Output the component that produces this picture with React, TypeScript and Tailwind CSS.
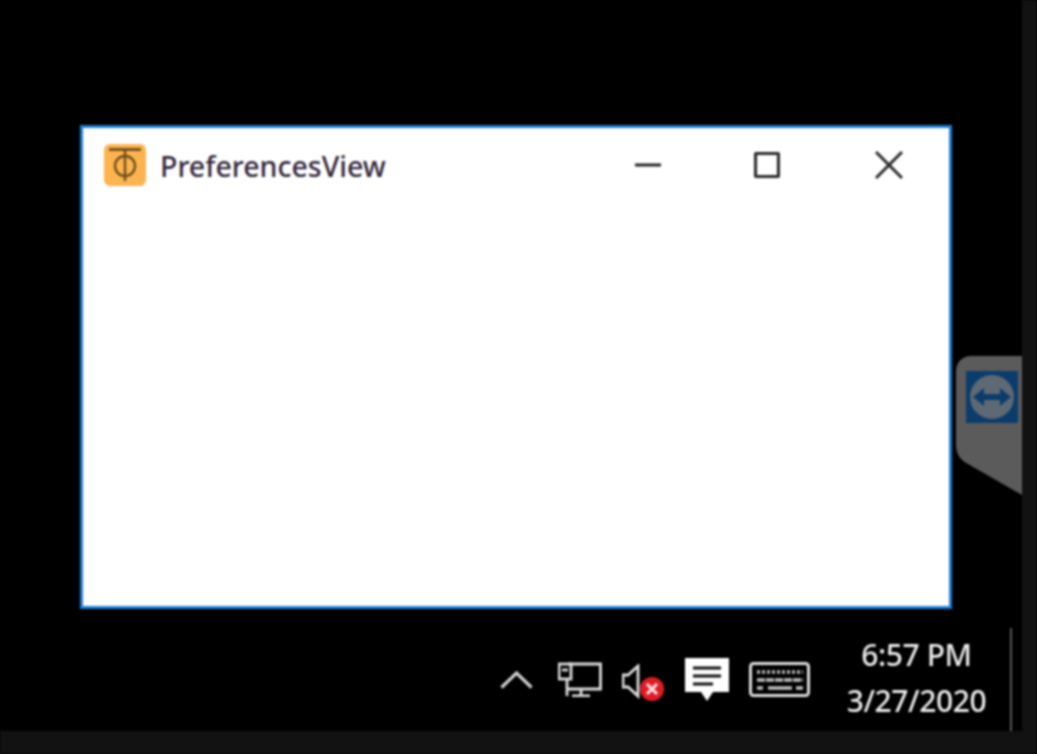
const FONT = "font-['Noto_Sans','Open_Sans',sans-serif]";

function AppGlyph() {
  return (
    <svg width="42" height="42" viewBox="0 0 42 42" className="shrink-0">
      <rect width="42" height="42" rx="6" fill="#fdb44f" />
      <g fill="none" stroke="#6f4f1c" strokeWidth="2.400">
        <path d="M5 5.500h32" strokeWidth="2.800" />
        <path d="M21 5.500V37" />
        <circle cx="21" cy="22" r="10" />
      </g>
    </svg>
  );
}

function WindowControls() {
  return (
    <div className="flex items-center gap-[93px] pr-[46px]">
      <svg width="26" height="28" viewBox="0 0 26 28">
        <path d="M0 14h26" stroke="#222" strokeWidth="3" />
      </svg>
      <svg width="26" height="26" viewBox="0 0 26 26" className="mr-[2px]">
        <rect x="1.500" y="1.500" width="23" height="23" rx="1" fill="none" stroke="#2c2c2c" strokeWidth="3.200" />
      </svg>
      <svg width="28" height="28" viewBox="0 0 28 28">
        <path d="M1 1l26 26M27 1L1 27" stroke="#2c2c2c" strokeWidth="3" />
      </svg>
    </div>
  );
}

function RemoteTab() {
  return (
    <svg width="66" height="139" viewBox="0 0 66 139" className="mt-[231px] shrink-0">
      <path d="M66 0H16C6 0 0 6 0 16V88C0 98 4 104 12 108L66 139Z" fill="#5b5b5b" />
      <rect x="10" y="15" width="52" height="52" fill="#0b3c6c" />
      <circle cx="36" cy="41" r="22" fill="#5f6973" />
      <path d="M17 41l11-9v6h16v-6l11 9-11 9v-6H28v6z" fill="#0b3c6c" />
    </svg>
  );
}

function TrayIcons() {
  return (
    <>
      <svg width="33" height="18" viewBox="0 0 33 18">
        <path d="M1.500 16.500L16.500 2l15 14.500" fill="none" stroke="#d0d0d0" strokeWidth="3.200" />
      </svg>
      <svg width="44" height="35" viewBox="0 0 44 35" className="ml-[25px]" fill="none" stroke="#dcdcdc" strokeWidth="2.800">
        <path d="M10 2h32.500v25H10" />
        <rect x="1" y="2" width="12" height="15" />
        <path d="M9 17v17M14 34h18M23 27v7" />
        <path d="M4 8h6" />
      </svg>
      <svg width="42" height="37" viewBox="0 0 42 37" className="ml-[20px] mt-[6px]">
        <path d="M1 11h5L16 2v30L6 23H1z" fill="none" stroke="#dcdcdc" strokeWidth="2.800" />
        <circle cx="30" cy="25" r="12" fill="#e01c26" />
        <path d="M25 20l10 10M35 20L25 30" stroke="#fbe4e4" strokeWidth="3" />
      </svg>
      <svg width="44" height="44" viewBox="0 0 44 44" className="ml-[21px]">
        <path d="M0 0h44v34H28l-6 9-6-9H0z" fill="#fff" />
        <path d="M8 10h28M8 18h28M8 26h20" stroke="#111" strokeWidth="3" />
      </svg>
      <svg width="61" height="35" viewBox="0 0 61 35" className="ml-[20px]">
        <rect x="1.500" y="1.500" width="58" height="32" rx="3" fill="none" stroke="#dcdcdc" strokeWidth="3" />
        <g stroke="#bcbcbc" strokeWidth="3.600">
          <path d="M8 10h46" strokeDasharray="3 2" />
          <path d="M8 18h46" strokeDasharray="8 1" />
          <path d="M8 26h6M19 26h24M47 26h7" />
        </g>
      </svg>
    </>
  );
}

export default function App() {
  return (
    <div className="w-[1037px] h-[754px] bg-black overflow-hidden">
      <div className={`h-full flex flex-col blur-[1.2px] ${FONT}`}>
        <div className="h-[731px] flex">
          {/* Desktop */}
          <div className="w-[1022px] flex flex-col">
            <div className="flex gap-[4px] pt-[125px] pl-[80px]">
              <div className="w-[872px] h-[484px] bg-white border-[3px] border-[#1b7ed4] shrink-0">
                <div className="h-[74px] flex items-center pl-[21px]">
                  <AppGlyph />
                  <span className="flex-1 pl-[14px] pt-[3px] text-[28.500px] font-medium leading-none text-[#33283c]">PreferencesView</span>
                  <WindowControls />
                </div>
              </div>
              <RemoteTab />
            </div>

            {/* Tray */}
            <div className="mt-auto h-[103px] flex items-center pl-[500px]">
              <TrayIcons />
              <div className="ml-[38px] w-[137px] pb-[4px] flex flex-col items-center text-[#ececec] text-[30px] tracking-[-0.4px] font-medium leading-[46px] whitespace-nowrap">
                <span>6:57 PM</span>
                <span>3/27/2020</span>
              </div>
              <div className="ml-[25px] w-[2px] h-full bg-[#5a5a5a]" />
            </div>
          </div>
          <div className="flex-1 bg-[#121212]" />
        </div>
        <div className="flex-1 bg-[#121212]" />
      </div>
    </div>
  );
}
